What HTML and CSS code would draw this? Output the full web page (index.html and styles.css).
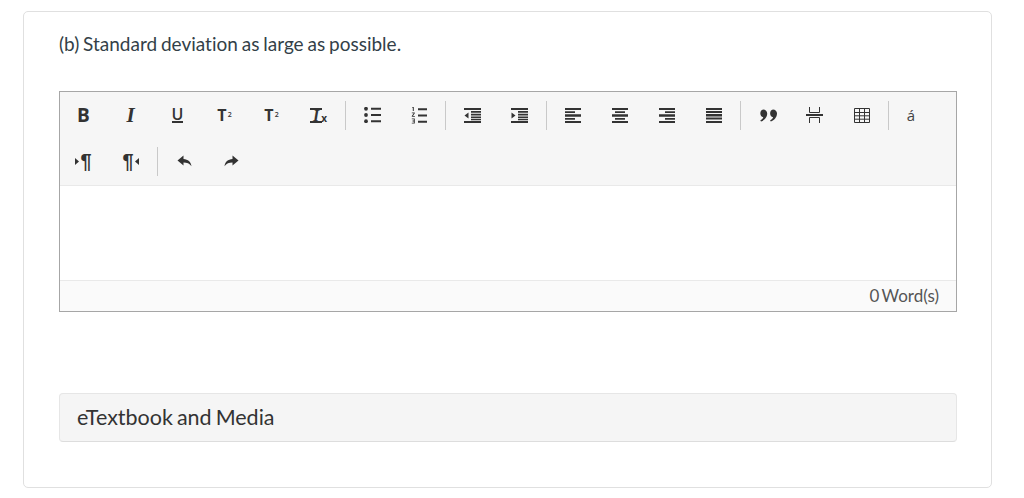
FILE: index.html
```html
<!DOCTYPE html>
<html lang="en">
<head>
<meta charset="utf-8">
<title>Question</title>
<link rel="stylesheet" href="styles.css">
</head>
<body>
<svg class="defs" width="0" height="0" aria-hidden="true">
  <symbol id="lines-left" viewBox="0 0 16 15"><path d="M0 0h16v2H0zM0 3.300h10v1.800H0zM0 6.200h16v2.600H0zM0 9.900h10v1.800H0zM0 13h16v2H0z"/></symbol>
  <symbol id="lines-center" viewBox="0 0 16 15"><path d="M0 0h16v2H0zM3 3.300h10v1.800H3zM0 6.200h16v2.600H0zM3 9.900h10v1.800H3zM0 13h16v2H0z"/></symbol>
  <symbol id="lines-right" viewBox="0 0 16 15"><path d="M0 0h16v2H0zM6 3.300h10v1.800H6zM0 6.200h16v2.600H0zM6 9.900h10v1.800H6zM0 13h16v2H0z"/></symbol>
  <symbol id="lines-full" viewBox="0 0 16 15"><path d="M0 0h16v2H0zM0 3h16v2H0zM0 6h16v2.600H0zM0 9.600h16v2H0zM0 13h16v2H0z"/></symbol>
</svg>
<main class="card">
  <p class="question">(b) Standard deviation as large as possible.</p>
  <section class="editor">
    <div class="toolbar">
      <div class="row">
        <span class="btn glyph bold">B</span>
        <span class="btn glyph ital">I</span>
        <span class="btn"><span class="glyph under">U</span></span>
        <span class="btn glyph tee">T<sub class="mini low">2</sub></span>
        <span class="btn glyph tee">T<sup class="mini high">2</sup></span>
        <span class="btn glyph clear"><span class="clear-i">I</span><span class="clear-x">x</span></span>
        <span class="sep"></span>
        <span class="btn">
          <svg class="ic" width="17" height="16" viewBox="0 0 17 16"><circle cx="2" cy="1.800" r="1.900"/><circle cx="2" cy="8" r="1.900"/><circle cx="2" cy="14.200" r="1.900"/><path d="M7 .8h10v2H7zM7 7h10v2H7zM7 13.200h10v2H7z"/></svg>
        </span>
        <span class="btn">
          <svg class="ic" width="16" height="17" viewBox="0 0 16 17"><path d="M1.500 0h1.300v4H1.800V1H1.200zM.8 5.500h3v.8L2 9h1.900v.8H.8V9l1.900-2.700H.8zM.8 11.500h3v5H.8v-.8h2v-1.300H1.500v-.8h1.300v-1.300h-2zM7 1.200h9v2H7zM7 7.500h9v2H7zM7 13.800h9v2H7z"/></svg>
        </span>
        <span class="sep"></span>
        <span class="btn">
          <svg class="ic" width="17" height="15" viewBox="0 0 17 15"><path d="M0 0h17v2H0zM7 3h10v1.800H7zM7 5.700h10v1.800H7zM7 8.400h10v1.800H7zM7 11h10v1.200H7zM0 13h17v2H0zM4.500 4.500v6L.5 7.500z"/></svg>
        </span>
        <span class="btn">
          <svg class="ic" width="17" height="15" viewBox="0 0 17 15"><path d="M0 0h17v2H0zM7 3h10v1.800H7zM7 5.700h10v1.800H7zM7 8.400h10v1.800H7zM7 11h10v1.200H7zM0 13h17v2H0zM.5 4.500v6l4-3z"/></svg>
        </span>
        <span class="sep"></span>
        <span class="btn"><svg class="ic" width="16" height="15"><use href="#lines-left"/></svg></span>
        <span class="btn"><svg class="ic" width="16" height="15"><use href="#lines-center"/></svg></span>
        <span class="btn"><svg class="ic" width="16" height="15"><use href="#lines-right"/></svg></span>
        <span class="btn"><svg class="ic" width="16" height="15"><use href="#lines-full"/></svg></span>
        <span class="sep"></span>
        <span class="btn">
          <svg class="ic" width="18" height="13" viewBox="0 0 18 13"><path d="M4.200.5a4 4 0 0 1 4 4.100c0 3.700-2.800 6.900-6.200 7.900l-.7-1.300c1.500-.7 2.600-1.700 3-3A4 4 0 0 1 4.200.5zM14 .5a4 4 0 0 1 4 4.100c0 3.700-2.800 6.900-6.200 7.900l-.7-1.300c1.500-.7 2.600-1.700 3-3A4 4 0 0 1 14 .5z"/></svg>
        </span>
        <span class="btn">
          <svg class="ic thin" width="17" height="16" viewBox="0 0 17 16"><path d="M3.500 0v5.500h10V0M3.500 16v-5.500h10V16"/><path class="thick" d="M0 8h17"/></svg>
        </span>
        <span class="btn">
          <svg class="ic thin" width="16" height="15" viewBox="0 0 16 15"><path d="M.5.500h15v14H.5zM.5 4.500h15M.5 7.800h15M.5 11.200h15M5.500 1v13M10.500 1v13"/></svg>
        </span>
        <span class="sep"></span>
        <span class="char">á</span>
      </div>
      <div class="row">
        <span class="btn">
          <span class="pilcrow"><svg class="tri" width="4" height="7" viewBox="0 0 4 7"><path d="M0 0l4 3.500L0 7z"/></svg>¶</span>
        </span>
        <span class="btn">
          <span class="pilcrow">¶<svg class="tri" width="4" height="7" viewBox="0 0 4 7"><path d="M4 0L0 3.500 4 7z"/></svg></span>
        </span>
        <span class="sep"></span>
        <span class="btn">
          <svg class="ic" width="15" height="12" viewBox="0 0 15 12"><path d="M6.500.5L.5 5.500l6 5V7.500c3.500 0 6 .8 8 3.800-.6-4.500-3.500-7-8-7.300z"/></svg>
        </span>
        <span class="btn">
          <svg class="ic" width="15" height="12" viewBox="0 0 15 12"><path d="M8.500.5l6 5-6 5V7.500c-3.500 0-6 .8-8 3.800.6-4.500 3.500-7 8-7.300z"/></svg>
        </span>
      </div>
    </div>
    <div class="content"></div>
    <div class="status">0 Word(s)</div>
  </section>
  <div class="media">eTextbook and Media</div>
</main>
</body>
</html>
```
FILE: styles.css
```css
* { box-sizing: border-box; }
html, body { margin: 0; background: #fff; }
body {
  padding: 11px 32px 0 23px;
  height: 498px;
  overflow: hidden;
  font-family: Lato, sans-serif;
  font-variant-ligatures: none;
}
.defs { position: absolute; }
.card {
  height: 477px;
  border: 1px solid #e0e0e0;
  border-radius: 5px;
  padding: 0 34px 0 35px;
}
.question {
  margin: 0;
  padding-top: 18px;
  height: 79px;
  font-size: 19px;
  word-spacing: -1px;
  line-height: 27px;
  color: #333f48;
}
.editor {
  height: 221px;
  border: 1px solid #a6a6a6;
  display: flex;
  flex-direction: column;
}
.toolbar {
  height: 94px;
  background: #f6f6f6;
  border-bottom: 1px solid #e9e9e9;
}
.row { display: flex; align-items: center; height: 46px; }
.btn {
  flex: none;
  width: 47px;
  height: 46px;
  display: flex;
  align-items: center;
  justify-content: center;
  color: #333;
}
.ic { fill: #333; display: block; }
.thin { fill: none; stroke: #333; stroke-width: 1; }
.thick { stroke-width: 2; }
.sep {
  flex: none;
  width: 1px;
  height: 29px;
  margin: 0 2.750px;
  background: #c9c9c9;
}
.glyph { font-family: "Open Sans", sans-serif; }
.bold { font-size: 19px; font-weight: 700; }
.ital { font-family: "Liberation Serif", serif; font-size: 21px; font-weight: 700; font-style: italic; }
.under {
  font-size: 16px;
  font-weight: 600;
  line-height: 13px;
  border-bottom: 2px solid #333;
}
.tee { font-size: 16px; font-weight: 700; }
.mini { font-size: 7px; line-height: 0; font-weight: 600; }
.low { vertical-align: -5px; margin-left: 1px; }
.high { vertical-align: 8px; margin-left: 1px; }
.clear { align-items: flex-end; }
.clear-i {
  font-family: "Liberation Serif", serif;
  font-size: 16px;
  font-style: italic;
  font-weight: 700;
  border-bottom: 2px solid #333;
  border-top: 2px solid #333;
  line-height: 11px;
  padding: 0 3px;
  margin-bottom: 15px;
}
.clear-x { font-size: 10px; font-weight: 700; line-height: 10px; margin: 0 0 15px -1px; }
.pilcrow {
  display: flex;
  align-items: center;
  gap: 1px;
  font-family: "Liberation Sans", sans-serif;
  font-size: 20px;
  font-weight: 700;
  color: #333;
}
.tri { fill: #333; }
.char {
  flex: none;
  width: 39px;
  text-align: center;
  font-family: "Open Sans", sans-serif;
  font-size: 15px;
  color: #444;
}
.content { flex: 1; background: #fff; }
.status {
  height: 32px;
  background: #fafafa;
  border-top: 1px solid #e9e9e9;
  border-bottom: 1px solid #a6a6a6;
  margin-bottom: -1px;
  padding-right: 17px;
  text-align: right;
  font-size: 17px;
  word-spacing: -2px;
  line-height: 29px;
  color: #555;
}
.media {
  margin-top: 81px;
  height: 49px;
  padding: 0 17px;
  background: #f5f5f5;
  border: 1px solid #e6e6e6;
  border-bottom-color: #ddd;
  border-radius: 4px;
  font-size: 21.500px;
  word-spacing: -1.500px;
  line-height: 47px;
  color: #333;
}
```
